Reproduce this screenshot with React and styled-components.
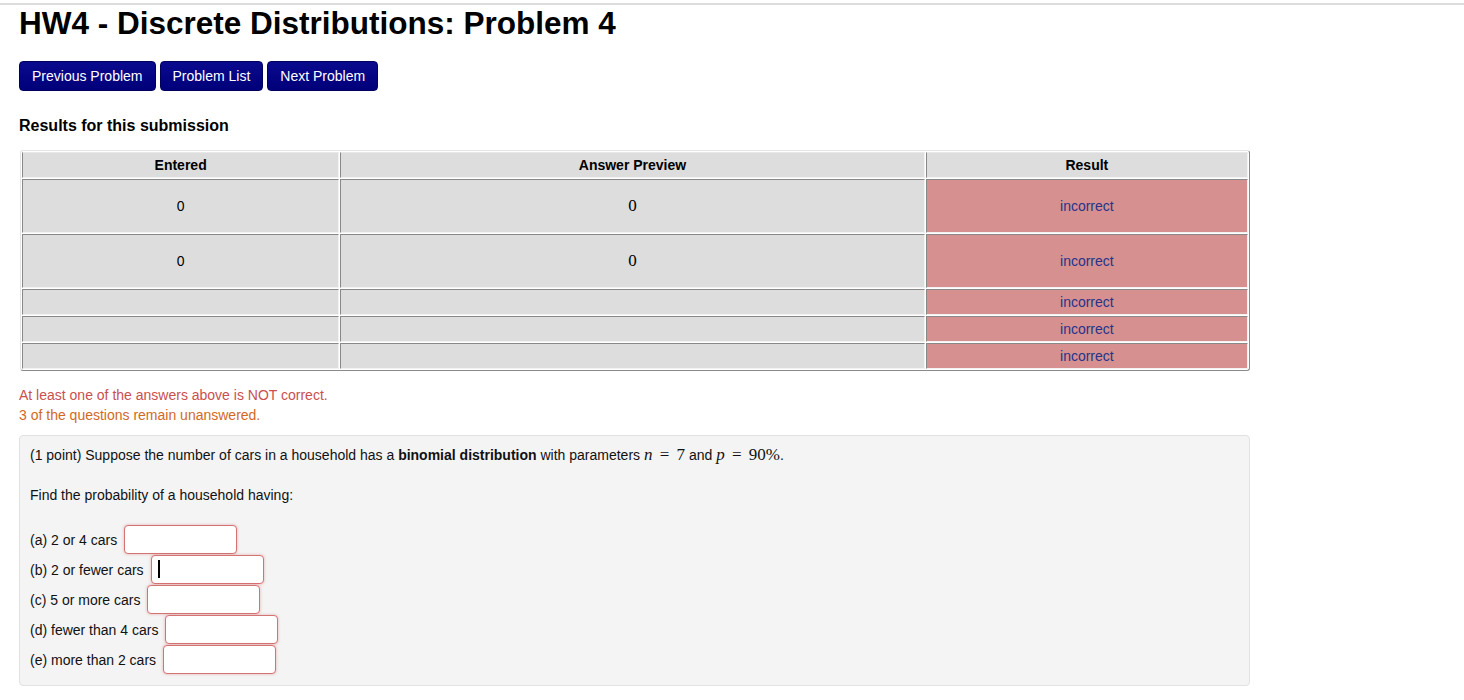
import React from "react";
import styled, { createGlobalStyle } from "styled-components";

const GlobalStyle = createGlobalStyle`
  body {
    margin: 0;
    background: #fff;
    font-family: "Liberation Sans", Arial, sans-serif;
    color: #000;
  }
`;

const Page = styled.div`
  margin-top: 3px;
  border-top: 2px solid #dcdcdc;
  padding: 0 19px 20px 19px;
`;

const Title = styled.h1`
  margin: 0;
  font-size: 31.5px;
  line-height: 36px;
  font-weight: bold;
`;

const NavBar = styled.div`
  display: flex;
  gap: 4px;
  margin-top: 20px;
`;

const NavButton = styled.button`
  height: 30px;
  padding: 0 12px;
  font-family: inherit;
  font-size: 14px;
  color: #fff;
  background: linear-gradient(#0a0a8e, #00007a);
  border: 1px solid #00005c;
  border-radius: 4px;
`;

const SectionTitle = styled.h2`
  margin: 25px 0 0 0;
  font-size: 16px;
  line-height: 20px;
  font-weight: bold;
`;

const ResultsTable = styled.table`
  margin-top: 14px;
  margin-left: 1px;
  width: 1230px;
  table-layout: fixed;
  border-collapse: separate;
  border-spacing: 1px;
  border: 1px solid;
  border-color: #e4e4e4 #8a8a8a #8a8a8a #e4e4e4;
  border-radius: 3px;
  font-size: 14px;
`;

const Cell = styled.td`
  height: ${(p) => p.$h}px;
  padding: 0;
  box-sizing: border-box;
  text-align: center;
  vertical-align: middle;
  background: ${(p) => (p.$bad ? "#d69090" : "#dddddd")};
  color: ${(p) => (p.$bad ? "#24348a" : "#000")};
  border: 1px solid;
  border-color: #888 #f2f2f2 #f2f2f2 #888;
`;

const HeadCell = styled.th`
  height: 26px;
  padding: 0;
  box-sizing: border-box;
  font-weight: bold;
  background: #dddddd;
  border: 1px solid;
  border-color: #e8e8e8 #f2f2f2 #f2f2f2 #888;
`;

const MathZero = styled.span`
  font-family: "Liberation Serif", "DejaVu Serif", serif;
  font-size: 17px;
`;

const Messages = styled.div`
  margin-top: 14px;
  font-size: 14px;
  line-height: 20px;
`;

const Message = styled.div`
  color: ${(p) => p.$color};
`;

const ProblemBox = styled.div`
  margin-top: 10px;
  width: 1209px;
  padding: 9px 10px 11px 10px;
  background: #f4f4f4;
  border: 1px solid #e2e2e2;
  border-radius: 4px;
  font-size: 14px;
  line-height: 20px;
  color: #111;
`;

const Para = styled.p`
  margin: 0 0 20px 0;
`;

const Math = styled.span`
  font-family: "Liberation Serif", "DejaVu Serif", serif;
  font-size: 17px;
  word-spacing: 3px;
`;

const Var = styled.i`
  font-style: italic;
`;

const AnswerList = styled.div`
  display: flex;
  flex-direction: column;
  gap: 1px;
  margin-top: 19px;
`;

const AnswerRow = styled.label`
  display: flex;
  align-items: center;
  gap: 7px;
  height: 29px;
`;

const InputWrap = styled.span`
  position: relative;
  display: inline-flex;
`;

const AnswerInput = styled.input`
  width: 113px;
  height: 29px;
  box-sizing: border-box;
  padding: 0 8px;
  font-family: inherit;
  font-size: 14px;
  background: #fff;
  border: 1px solid #d47373;
  border-radius: 4px;
  box-shadow: 0 0 3px rgba(210, 90, 90, 0.45);
  outline: none;
`;

const Caret = styled.span`
  position: absolute;
  left: 7px;
  top: 5px;
  width: 2px;
  height: 18px;
  background: #000;
`;

const rows = [
  { entered: "0", preview: "0", h: 54 },
  { entered: "0", preview: "0", h: 54 },
  { entered: "", preview: "", h: 26 },
  { entered: "", preview: "", h: 26 },
  { entered: "", preview: "", h: 26 },
];

const answers = [
  { label: "(a) 2 or 4 cars" },
  { label: "(b) 2 or fewer cars", focused: true },
  { label: "(c) 5 or more cars" },
  { label: "(d) fewer than 4 cars" },
  { label: "(e) more than 2 cars" },
];

export default function App() {
  return (
    <>
      <GlobalStyle />
      <Page>
        <Title>HW4 - Discrete Distributions: Problem 4</Title>
        <NavBar>
          <NavButton>Previous Problem</NavButton>
          <NavButton>Problem List</NavButton>
          <NavButton>Next Problem</NavButton>
        </NavBar>

        <SectionTitle>Results for this submission</SectionTitle>
        <ResultsTable>
          <colgroup>
            <col style={{ width: 317 }} />
            <col style={{ width: 584 }} />
            <col style={{ width: 322 }} />
          </colgroup>
          <thead>
            <tr>
              <HeadCell>Entered</HeadCell>
              <HeadCell>Answer Preview</HeadCell>
              <HeadCell>Result</HeadCell>
            </tr>
          </thead>
          <tbody>
            {rows.map((r, i) => (
              <tr key={i}>
                <Cell $h={r.h}>{r.entered}</Cell>
                <Cell $h={r.h}>
                  <MathZero>{r.preview}</MathZero>
                </Cell>
                <Cell $h={r.h} $bad>
                  incorrect
                </Cell>
              </tr>
            ))}
          </tbody>
        </ResultsTable>

        <Messages>
          <Message $color="#c9504f">At least one of the answers above is NOT correct.</Message>
          <Message $color="#d2691e">3 of the questions remain unanswered.</Message>
        </Messages>

        <ProblemBox>
          <Para>
            (1 point) Suppose the number of cars in a household has a <b>binomial distribution</b> with
            parameters{" "}
            <Math>
              <Var>n</Var> = 7
            </Math>{" "}
            and{" "}
            <Math>
              <Var>p</Var> = 90%
            </Math>
            .
          </Para>
          <Para>Find the probability of a household having:</Para>
          <AnswerList>
            {answers.map((a) => (
              <AnswerRow key={a.label}>
                {a.label}
                <InputWrap>
                  <AnswerInput type="text" />
                  {a.focused && <Caret />}
                </InputWrap>
              </AnswerRow>
            ))}
          </AnswerList>
        </ProblemBox>
      </Page>
    </>
  );
}
